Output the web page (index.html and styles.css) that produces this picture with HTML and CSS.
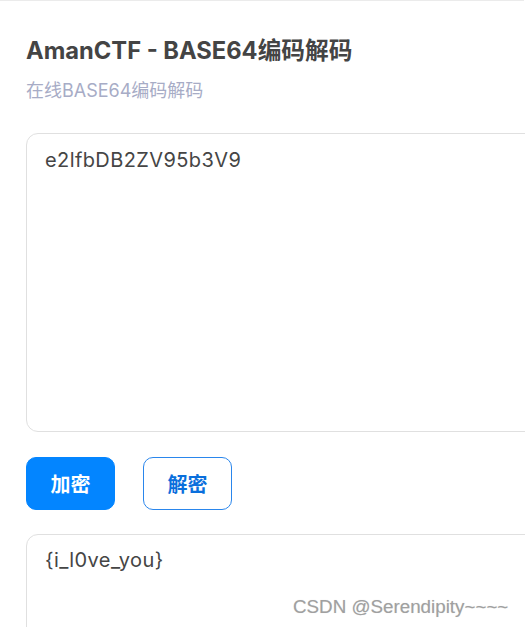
FILE: index.html
```html
<!DOCTYPE html>
<html lang="zh">
<head>
<meta charset="utf-8">
<link rel="stylesheet" href="styles.css">
</head>
<body>
<div class="topline"></div>
<main class="page">
  <h1 class="title">AmanCTF - BASE64编码解码</h1>
  <p class="subtitle">在线BASE64编码解码</p>
  <div class="box box-input">e2lfbDB2ZV95b3V9</div>
  <div class="actions">
    <button class="btn btn-primary">加密</button>
    <button class="btn btn-outline">解密</button>
  </div>
  <div class="box box-output">{i_l0ve_you}</div>
</main>
<div class="watermark">CSDN @Serendipity~~~~</div>
</body>
</html>
```
FILE: styles.css
```css
html, body {
  margin: 0;
  padding: 0;
  background: #fff;
  overflow: hidden;
  height: 627px;
}
body {
  font-family: Inter, "Noto Sans CJK SC", sans-serif;
  position: relative;
}
.topline {
  height: 1px;
  background: #ebebeb;
  width: 524px;
}
.page {
  padding: 0 0 0 26px;
  width: 560px;
}
.title {
  margin: 34px 0 0 0;
  font-size: 23.7px;
  line-height: 32px;
  font-weight: 700;
  color: #444;
}
.subtitle {
  margin: 12px 0 0 0;
  font-size: 18px;
  line-height: 24px;
  color: #a7acc6;
}
.box {
  box-sizing: border-box;
  border: 1px solid #e0e0e0;
  border-radius: 12px;
  padding: 12px 18px;
  font-size: 20px;
  line-height: 28px;
  letter-spacing: 0.4px;
  color: #454545;
  width: 560px;
}
.box-input {
  margin-top: 30px;
  height: 299px;
}
.actions {
  display: flex;
  gap: 28px;
  margin-top: 25px;
}
.btn {
  box-sizing: border-box;
  width: 89px;
  height: 53px;
  border-radius: 10px;
  font-family: "Noto Sans CJK SC", sans-serif;
  font-size: 20px;
  font-weight: 700;
  cursor: pointer;
  padding: 0;
}
.btn-primary {
  background: #0385ff;
  border: 1px solid #0385ff;
  color: #fff;
}
.btn-outline {
  background: #fff;
  border: 1px solid #2a86ec;
  color: #0a6fdc;
}
.box-output {
  margin-top: 24px;
  height: 200px;
  padding-top: 11px;
}
.watermark {
  position: absolute;
  left: 293px;
  top: 595px;
  font-family: "Liberation Sans", Arial, sans-serif;
  font-size: 18.8px;
  line-height: 24px;
  color: #a0a0a0;
  text-shadow: 0 0 1px rgba(0,0,0,0.15);
}
```
